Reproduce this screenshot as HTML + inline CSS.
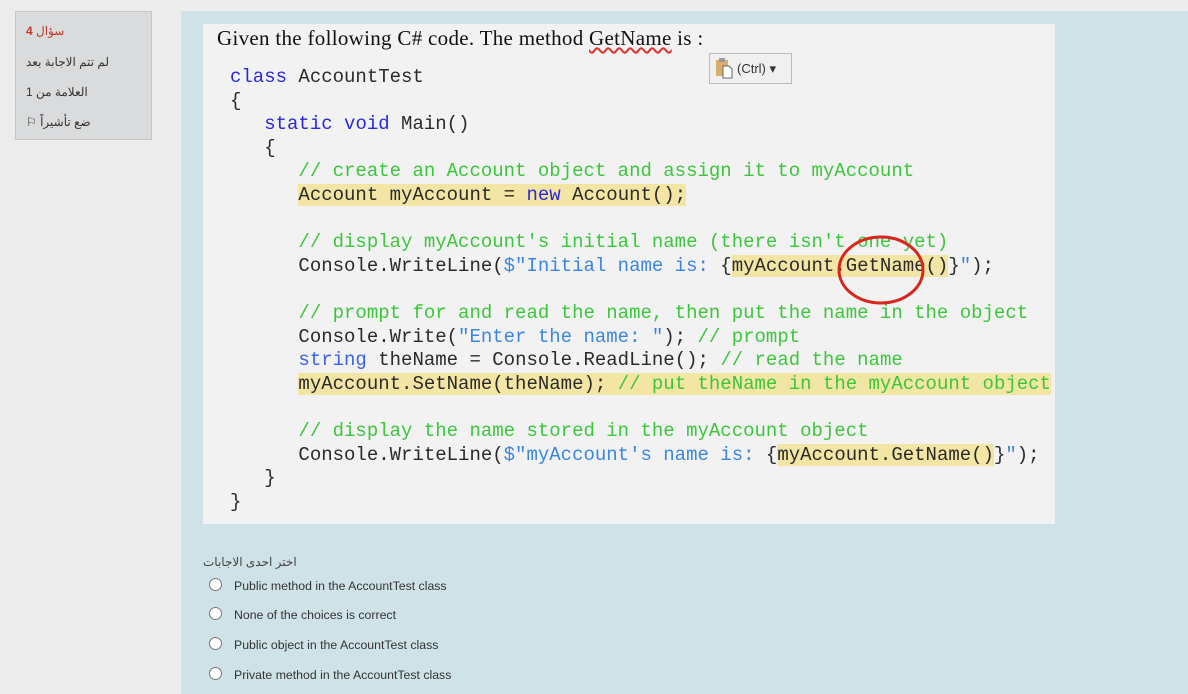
<!DOCTYPE html>
<html><head><meta charset="utf-8"><style>
body{margin:0;width:1188px;height:694px;background:#ececec;position:relative;overflow:hidden;font-family:"Liberation Sans","Noto Sans CJK SC",sans-serif}
.side{position:absolute;left:15px;top:11px;width:135px;height:127px;background:#d9dbdd;border:1px solid #c4c6c8}
.side div{position:absolute;left:10px;font-size:12px;color:#333;white-space:nowrap}
.main{position:absolute;left:181px;top:11px;width:1007px;height:683px;background:#cfe2e8}
.code{position:absolute;left:203px;top:24px;width:852px;height:500px;background:#f2f2f2}
.title{position:absolute;left:217px;top:26px;font-family:"Liberation Serif",serif;font-size:21px;letter-spacing:0.3px;color:#111;white-space:nowrap}
pre{position:absolute;left:230px;top:66px;margin:0;font-family:"Liberation Mono",monospace;font-size:19px;line-height:23.6px;color:#2a2a2a}
.k{color:#2a2ad8}.k2{color:#3d62e6}.c{color:#3cc63c}.s{color:#3a86e0}
.h{background:#f3e6a4}
.ctrl{position:absolute;left:709px;top:53px;width:81px;height:29px;border:1px solid #bcbcbc;background:#f0f0f0;font-size:13px;color:#333}
.ans{position:absolute;left:209px;font-size:12.3px;color:#333}
.ans i{display:inline-block;width:11px;height:11px;border:1px solid #777;border-radius:50%;background:#fff;vertical-align:-1px;margin-right:12px}
</style></head><body>
<div class="side">
<div style="top:12px"><b style="color:#c0392b">4</b><span style="color:#c0392b"> سؤال</span></div>
<div style="top:43px">لم تتم الاجابة بعد</div>
<div style="top:73px">العلامة من 1</div>
<div style="top:103px">⚐ ضع تأشيراً</div>
</div>
<div class="main"></div>
<div class="code"></div>
<div class="title">Given the following C# code. The method <span style="text-decoration:underline wavy #d33">GetName</span> is :</div>
<div class="ctrl"><svg width="20" height="22" style="position:absolute;left:4px;top:3px" viewBox="0 0 20 22"><rect x="2" y="3" width="12" height="16" fill="#d9ae6b"/><rect x="5" y="1" width="6" height="4" fill="#999"/><path d="M9 9h6l3 3v9H9z" fill="#fff" stroke="#666"/></svg><span style="position:absolute;left:27px;top:7px">(Ctrl) ▾</span></div>
<pre><span class="k">class</span> AccountTest
{
   <span class="k">static</span> <span class="k">void</span> Main()
   {
      <span class="c">// create an Account object and assign it to myAccount</span>
      <span class="h">Account myAccount = <span class="k">new</span> Account();</span>

      <span class="c">// display myAccount's initial name (there isn't one yet)</span>
      Console.WriteLine(<span class="s">$"Initial name is: </span>{<span class="h">myAccount.GetName()</span>}<span class="s">"</span>);

      <span class="c">// prompt for and read the name, then put the name in the object</span>
      Console.Write(<span class="s">"Enter the name: "</span>); <span class="c">// prompt</span>
      <span class="k2">string</span> theName = Console.ReadLine(); <span class="c">// read the name</span>
      <span class="h">myAccount.SetName(theName); <span class="c">// put theName in the myAccount object</span></span>

      <span class="c">// display the name stored in the myAccount object</span>
      Console.WriteLine(<span class="s">$"myAccount's name is: </span>{<span class="h">myAccount.GetName()</span>}<span class="s">"</span>);
   }
}</pre>
<svg style="position:absolute;left:832px;top:232px" width="100" height="80"><ellipse cx="49" cy="38" rx="42" ry="33" fill="none" stroke="#d8261c" stroke-width="3"/></svg>
<div style="position:absolute;left:203px;top:555px;font-size:12px;color:#444">اختر احدى الاجابات</div>
<div class="ans" style="top:578px"><i></i>Public method in the AccountTest class</div>
<div class="ans" style="top:607px"><i></i>None of the choices is correct</div>
<div class="ans" style="top:637px"><i></i>Public object in the AccountTest class</div>
<div class="ans" style="top:667px"><i></i>Private method in the AccountTest class</div>
</body></html>
